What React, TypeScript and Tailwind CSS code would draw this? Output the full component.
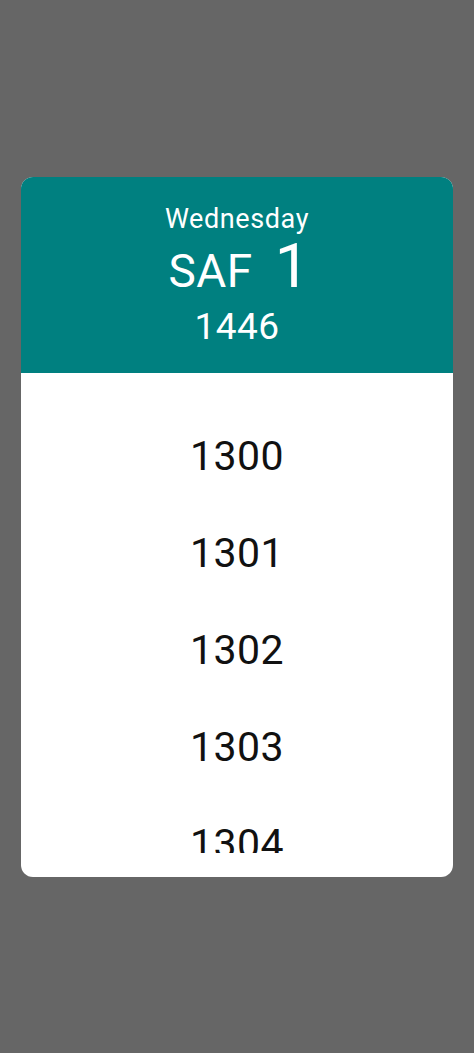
import React from "react";

const years = [1300, 1301, 1302, 1303, 1304];

const App = () => {
  return (
    <div className="min-h-screen w-full bg-[#666666] flex items-center justify-center font-['Roboto',sans-serif]">
      <div className="w-[432px] h-[700px] bg-white rounded-[12px] overflow-hidden flex flex-col">
        {/* Header */}
        <div className="h-[196px] bg-[#008080] text-white flex flex-col items-center pt-[25px]">
          <div className="text-[27px] leading-[34px] tracking-[0.6px]">Wednesday</div>
          <div className="flex items-end gap-[22px] h-[61px] pl-[4px]">
            <span className="text-[46px] leading-[52px] tracking-[0.5px]">SAF</span>
            <span className="text-[62px] leading-[62px]">1</span>
          </div>
          <div className="text-[37px] leading-[44px] mt-[8px] tracking-[0.4px]">1446</div>
        </div>

        <div className="flex-1 overflow-hidden pt-[36px] mb-[24px]">
          {years.map((y) => (
            <div
              key={y}
              className="h-[97px] flex items-center justify-center text-[41px] tracking-[0.4px] text-[#111111]"
            >
              {y}
            </div>
          ))}
        </div>
      </div>
    </div>
  );
};

export default App;
